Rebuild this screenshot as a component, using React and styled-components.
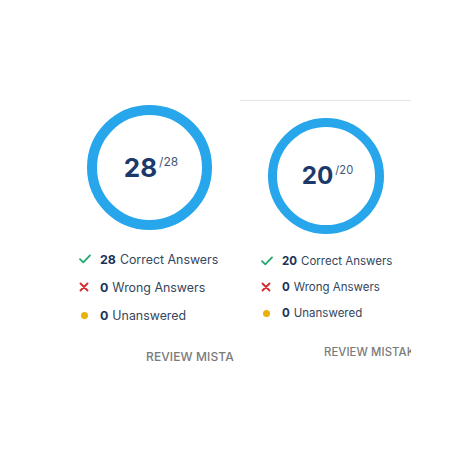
import React from "react";
import styled, { createGlobalStyle } from "styled-components";

const Global = createGlobalStyle`
  body {
    margin: 0;
    background: #fff;
    font-family: Inter, "Noto Sans", sans-serif;
  }
`;

const Page = styled.div`
  display: flex;
  align-items: flex-start;
  gap: 6px;
  padding-left: 64px;
  width: 474px;
  height: 474px;
  box-sizing: border-box;
`;

const Card = styled.div`
  width: ${(p) => p.$w}px;
  overflow: hidden;
  margin-top: ${(p) => p.$top}px;
  padding-top: ${(p) => p.$pad}px;
  border-top: ${(p) => (p.$line ? "1.5px solid #e3e7ea" : "none")};
  display: flex;
  flex-direction: column;
`;

const Ring = styled.div`
  align-self: center;
  width: ${(p) => p.$size}px;
  height: ${(p) => p.$size}px;
  box-sizing: border-box;
  border: ${(p) => p.$stroke}px solid #27a6ec;
  border-radius: 50%;
  display: flex;
  align-items: center;
  justify-content: center;
`;

const Score = styled.div`
  display: flex;
  align-items: flex-start;
  color: #1b3a6b;
  font-weight: 700;
  font-size: ${(p) => p.$fs}px;
  line-height: 1;
  margin-left: 4px;
`;

const Total = styled.span`
  font-size: ${(p) => p.$fs}px;
  font-weight: 400;
  color: #3d5677;
  margin-left: 2px;
  margin-top: 1px;
`;

const List = styled.div`
  display: flex;
  flex-direction: column;
  margin-top: ${(p) => p.$mt}px;
  padding-left: ${(p) => p.$pl}px;
`;

const Row = styled.div`
  display: flex;
  align-items: center;
  height: ${(p) => p.$h}px;
  font-size: ${(p) => p.$fs}px;
  color: #34465c;
  white-space: nowrap;
`;

const IconBox = styled.span`
  width: 21px;
  display: flex;
  align-items: center;
`;

const Dot = styled.span`
  width: 7px;
  height: 7px;
  border-radius: 50%;
  background: #e8b10e;
  margin-left: 2px;
`;

const Num = styled.b`
  font-weight: 700;
  color: #1b3358;
  margin-right: 4px;
`;

const Review = styled.div`
  margin-top: ${(p) => p.$mt}px;
  padding-left: ${(p) => p.$pl}px;
  font-size: ${(p) => p.$fs}px;
  color: #7a7a7a;
  font-weight: 500;
  letter-spacing: 0.1px;
  white-space: nowrap;
`;

const Check = () => (
  <svg width="12" height="10" viewBox="0 0 12 10">
    <path d="M1 5.2 L4.3 8.4 L11 1.4" fill="none" stroke="#1fa971" strokeWidth="1.8" strokeLinecap="round" strokeLinejoin="round" />
  </svg>
);

const Cross = () => (
  <svg width="10" height="10" viewBox="0 0 10 10">
    <path d="M1.5 1.5 L8.5 8.5 M8.5 1.5 L1.5 8.5" fill="none" stroke="#d32f2f" strokeWidth="1.9" strokeLinecap="round" />
  </svg>
);

const ResultCard = ({ n, s, top, pad, line, w, listPl, reviewPl, rowFs, reviewFs }) => (
  <Card $w={w} $top={top} $pad={pad} $line={line}>
    <Ring $size={Math.round(125 * s)} $stroke={Math.round(10 * s)}>
      <Score $fs={26 * s}>
        {n}
        <Total $fs={12 * s}>/{n}</Total>
      </Score>
    </Ring>
    <List $mt={15 * s} $pl={listPl}>
      <Row $h={28 * s} $fs={rowFs}>
        <IconBox><Check /></IconBox>
        <Num>{n}</Num>Correct Answers
      </Row>
      <Row $h={28 * s} $fs={rowFs}>
        <IconBox><Cross /></IconBox>
        <Num>0</Num>Wrong Answers
      </Row>
      <Row $h={28 * s} $fs={rowFs}>
        <IconBox><Dot /></IconBox>
        <Num>0</Num>Unanswered
      </Row>
    </List>
    <Review $mt={20 * s} $pl={reviewPl} $fs={reviewFs}>REVIEW MISTAKES</Review>
  </Card>
);

export default function App() {
  return (
    <>
      <Global />
      <Page>
        <ResultCard n={28} s={1} top={105} pad={0} w={170} listPl={15} reviewPl={82} rowFs={12.4} reviewFs={12} />
        <ResultCard n={20} s={0.93} top={100} pad={17} line w={171} listPl={21} reviewPl={84} rowFs={11.5} reviewFs={11.3} />
      </Page>
    </>
  );
}
